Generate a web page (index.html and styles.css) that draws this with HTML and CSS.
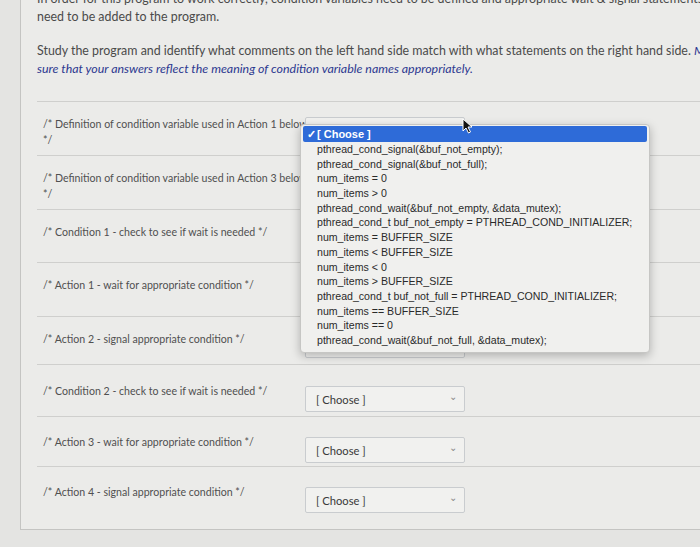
FILE: index.html
```html
<!DOCTYPE html>
<html>
<head>
<meta charset="utf-8">
<link rel="stylesheet" href="styles.css">
</head>
<body>
<div class="page">
  <div class="question">
    <p class="intro cut">In order for this program to work correctly, condition variables need to be defined and appropriate wait &amp; signal statements</p>
    <p class="intro">need to be added to the program.</p>
    <p class="study">Study the program and identify what comments on the left hand side match with what statements on the right hand side. <em>Make</em><br><em>sure that your answers reflect the meaning of condition variable names appropriately.</em></p>
    <div class="rows">
      <div class="row r1">
        <div class="label">/* Definition of condition variable used in Action 1 below<br>*/</div>
        <div class="select"><span>[ Choose ]</span><span class="chev">&#8964;</span></div>
      </div>
      <div class="row r2">
        <div class="label">/* Definition of condition variable used in Action 3 below<br>*/</div>
        <div class="select"><span>[ Choose ]</span><span class="chev">&#8964;</span></div>
      </div>
      <div class="row r3">
        <div class="label">/* Condition 1 - check to see if wait is needed */</div>
        <div class="select"><span>[ Choose ]</span><span class="chev">&#8964;</span></div>
      </div>
      <div class="row r4">
        <div class="label">/* Action 1 - wait for appropriate condition */</div>
        <div class="select"><span>[ Choose ]</span><span class="chev">&#8964;</span></div>
      </div>
      <div class="row r5">
        <div class="label">/* Action 2 - signal appropriate condition */</div>
        <div class="select"><span>[ Choose ]</span><span class="chev">&#8964;</span></div>
      </div>
      <div class="row r6">
        <div class="label">/* Condition 2 - check to see if wait is needed */</div>
        <div class="select"><span>[ Choose ]</span><span class="chev">&#8964;</span></div>
      </div>
      <div class="row r7">
        <div class="label">/* Action 3 - wait for appropriate condition */</div>
        <div class="select"><span>[ Choose ]</span><span class="chev">&#8964;</span></div>
      </div>
      <div class="row r8">
        <div class="label">/* Action 4 - signal appropriate condition */</div>
        <div class="select"><span>[ Choose ]</span><span class="chev">&#8964;</span></div>
      </div>
    </div>
  </div>

  <div class="menu">
    <div class="opt active"><span class="check">&#10003;</span>[ Choose ]</div>
    <div class="opt">pthread_cond_signal(&amp;buf_not_empty);</div>
    <div class="opt">pthread_cond_signal(&amp;buf_not_full);</div>
    <div class="opt">num_items = 0</div>
    <div class="opt">num_items &gt; 0</div>
    <div class="opt">pthread_cond_wait(&amp;buf_not_empty, &amp;data_mutex);</div>
    <div class="opt">pthread_cond_t buf_not_empty = PTHREAD_COND_INITIALIZER;</div>
    <div class="opt">num_items = BUFFER_SIZE</div>
    <div class="opt">num_items &lt; BUFFER_SIZE</div>
    <div class="opt">num_items &lt; 0</div>
    <div class="opt">num_items &gt; BUFFER_SIZE</div>
    <div class="opt">pthread_cond_t buf_not_full = PTHREAD_COND_INITIALIZER;</div>
    <div class="opt">num_items == BUFFER_SIZE</div>
    <div class="opt">num_items == 0</div>
    <div class="opt">pthread_cond_wait(&amp;buf_not_full, &amp;data_mutex);</div>
  </div>

  <svg class="cursor" width="11" height="16" viewBox="0 0 11 16">
    <path d="M1 1 L1 13 L4 10 L6.5 15 L8.5 14 L6 9 L10 9 Z" fill="#111" stroke="#fff" stroke-width="1"/>
  </svg>
</div>
</body>
</html>
```

FILE: styles.css
```css
html, body {
  margin: 0;
  padding: 0;
}
body {
  width: 700px;
  height: 547px;
  overflow: hidden;
  background: #e4e4e2;
  font-family: Lato, "Open Sans", sans-serif;
  color: #4a4a4a;
}
.page {
  position: relative;
  width: 700px;
  height: 547px;
  overflow: hidden;
}
.question {
  margin-left: 20px;
  width: 720px;
  border-left: 1px solid #c4c4c2;
  border-bottom: 1px solid #c4c4c2;
  background: #ebebe9;
  box-sizing: border-box;
  padding-left: 16px;
}
.intro {
  margin: 0;
  font-size: 12.4px;
  line-height: 18px;
  white-space: nowrap;
}
.intro.cut {
  margin-top: -10px;
}
.study {
  margin: 16px 0 0 0;
  font-size: 12.4px;
  line-height: 18px;
  white-space: nowrap;
}
.study em {
  color: #2b3890;
  font-style: italic;
}
.rows {
  margin-top: 23px;
  border-top: 1px solid #cfcfcd;
}
.row {
  display: flex;
  align-items: flex-start;
  border-bottom: 1px solid #cfcfcd;
  box-sizing: border-box;
  padding-top: 14px;
}
.r1, .r2, .r4 { height: 54px; }
.r3 { height: 53px; }
.r5 { height: 48px; }
.r6 { height: 52px; padding-top: 18px; }
.r7 { height: 50px; padding-top: 17px; }
.r8 { height: 62px; padding-top: 17px; border-bottom: none; }
.label {
  width: 268px;
  padding-left: 6px;
  box-sizing: border-box;
  font-size: 10.6px;
  line-height: 16px;
  color: #505050;
  white-space: nowrap;
  overflow: hidden;
}
.select {
  width: 160px;
  height: 26px;
  margin-top: 1px;
  box-sizing: border-box;
  border: 1px solid #c9cccf;
  border-radius: 2px;
  background: #f1f1ef;
  display: flex;
  align-items: center;
  justify-content: space-between;
  padding: 0 7px 0 10px;
  font-size: 11.2px;
  color: #3a3a3a;
}
.r6 .select, .r7 .select, .r8 .select { margin-top: 3px; }
.chev {
  font-size: 10px;
  color: #8a8a8a;
  line-height: 1;
  margin-top: -6px;
}
.menu {
  position: absolute;
  left: 300px;
  top: 124px;
  width: 350px;
  height: 229px;
  box-sizing: border-box;
  background: #f0f0ee;
  border: 1px solid #c6c6c4;
  border-radius: 4px;
  box-shadow: 0 3px 10px rgba(0,0,0,0.25);
  padding: 1px 2px 4px 2px;
  font-family: "Liberation Sans", Arial, sans-serif;
  font-size: 10.6px;
  color: #2a2a2a;
}
.opt {
  height: 14.7px;
  line-height: 14.7px;
  padding-left: 14px;
  white-space: nowrap;
}
.opt.active {
  height: 16px;
  line-height: 16px;
  background: #2e6bd8;
  color: #fff;
  font-weight: bold;
  font-size: 11px;
  padding-left: 4px;
  border-radius: 2px;
}
.check {
  display: inline-block;
  width: 10px;
}
.cursor {
  position: absolute;
  left: 462px;
  top: 118px;
}
```
